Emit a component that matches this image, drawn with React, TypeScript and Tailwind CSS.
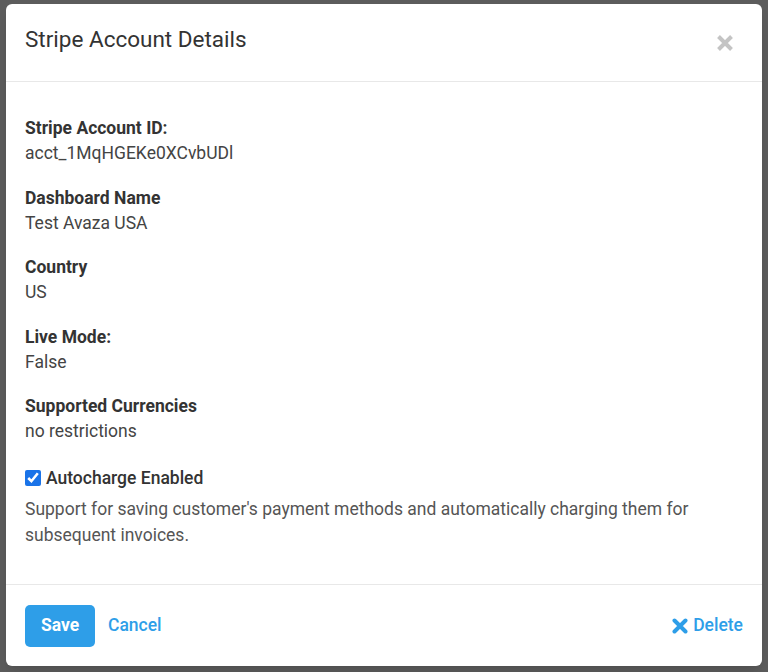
import React from "react";

const Field = ({ label, value }: { label: string; value: string }) => (
  <div className="flex flex-col">
    <div className="text-[17.5px] leading-[25px] font-bold text-[#333333]">{label}</div>
    <div className="text-[17.5px] leading-[25px] text-[#444444]">{value}</div>
  </div>
);

export default function App() {
  return (
    <div
      className="w-[768px] h-[672px] bg-[#5c5c5c] pt-[4px] pl-[6px] overflow-hidden"
      style={{ fontFamily: "Roboto, 'Liberation Sans', sans-serif" }}
    >
      <div className="w-[756px] h-[662px] bg-white rounded-[6px] flex flex-col shadow-lg">
        <div className="h-[78px] border-b border-[#e8e8e8] flex items-center justify-between pl-[19px] pr-[28px] pb-[5px]">
          <h1 className="text-[22.5px] text-[#333333] font-normal">Stripe Account Details</h1>
          <svg width="18" height="18" viewBox="0 0 18 18" className="mt-[6px]">
            <path d="M2.5 2.5 L15.5 15.5 M15.5 2.5 L2.5 15.5" stroke="#c4c4c4" strokeWidth="4" strokeLinecap="butt" />
          </svg>
        </div>
        <div className="flex-1 flex flex-col pl-[19px] pr-[30px] pt-[34px] gap-[19.5px]">
          <Field label="Stripe Account ID:" value="acct_1MqHGEKe0XCvbUDl" />
          <Field label="Dashboard Name" value="Test Avaza USA" />
          <Field label="Country" value="US" />
          <Field label="Live Mode:" value="False" />
          <Field label="Supported Currencies" value="no restrictions" />
          <div className="flex flex-col gap-[5px]">
            <label className="mt-[2px] flex items-center gap-[5px] text-[17.5px] leading-[25px] text-[#333333] font-medium">
              <input type="checkbox" defaultChecked className="w-[16px] h-[16px] accent-[#1a73e8]" />
              Autocharge Enabled
            </label>
            <div className="text-[17.5px] leading-[26px] text-[#555555]">
              Support for saving customer's payment methods and automatically charging them for subsequent invoices.
            </div>
          </div>
        </div>
        <div className="h-[82px] border-t border-[#e8e8e8] flex items-center justify-between pl-[19px] pr-[19px]">
          <div className="flex items-center gap-[13px]">
            <button className="w-[70px] h-[42px] rounded-[5px] bg-[#2e9ee8] text-white text-[17.5px] font-bold">Save</button>
            <button className="text-[#2e9ee8] text-[17.5px] font-medium">Cancel</button>
          </div>
          <button className="flex items-center gap-[5px] text-[#2e9ee8] text-[17.5px] font-medium">
            <svg width="16" height="16" viewBox="0 0 16 16">
              <path d="M2.5 2.5 L13.5 13.5 M13.5 2.5 L2.5 13.5" stroke="#2e9ee8" strokeWidth="4" strokeLinecap="round" />
            </svg>
            Delete
          </button>
        </div>
      </div>
    </div>
  );
}
